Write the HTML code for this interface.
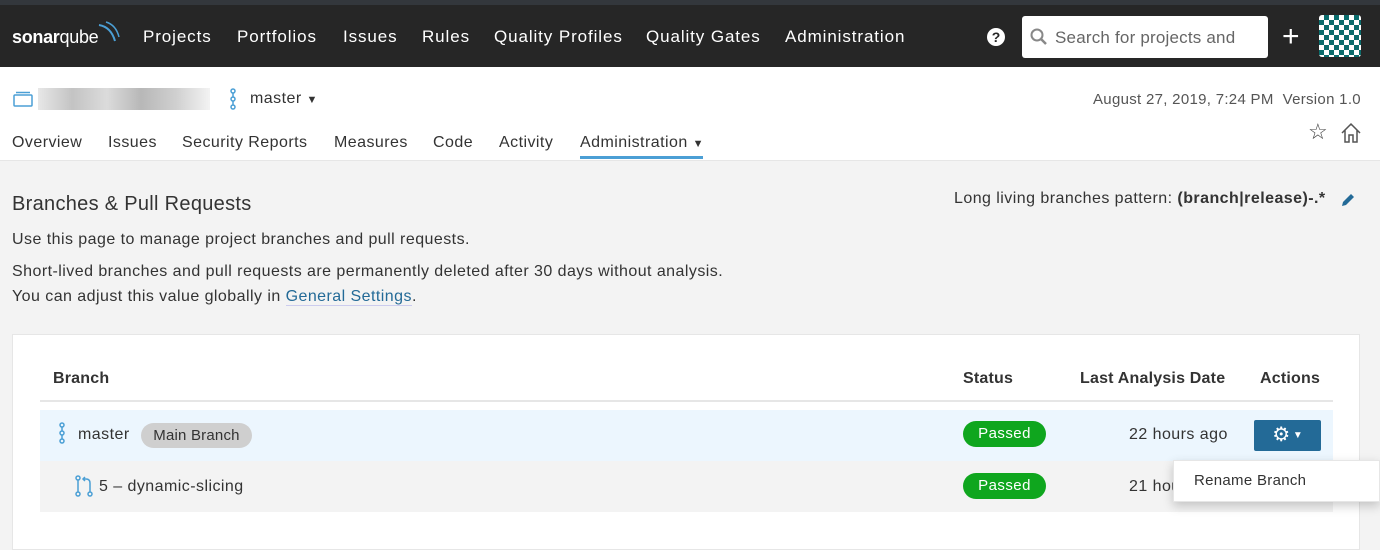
<!DOCTYPE html>
<html><head><style>
*{box-sizing:border-box;margin:0;padding:0}
body{width:1380px;height:550px;overflow:hidden;background:#f3f3f3;font-family:"Liberation Sans",Helvetica,Arial,sans-serif;color:#333;position:relative;letter-spacing:0.45px}
.a{position:absolute;white-space:nowrap}
.top{position:absolute;left:0;top:0;width:1380px;height:5px;background:#33373c}
.nav{position:absolute;left:0;top:5px;width:1380px;height:62px;background:#262626}
.n{color:#fff;font-size:17px;top:27px;letter-spacing:0.9px}
.sub{position:absolute;left:0;top:67px;width:1380px;height:94px;background:#fff;border-bottom:1px solid #e6e6e6}
.tab{font-size:16px;color:#333;top:134px}
.card{position:absolute;left:12px;top:334px;width:1348px;height:216px;background:#fff;border:1px solid #e6e6e6}
.th{font-size:16px;font-weight:bold;top:370px;letter-spacing:0.2px}
.pass{background:#0fa61e;color:#fff;font-size:15px;border-radius:14px;width:83px;height:26px;line-height:26px;text-align:center}
</style></head><body>
<div class="top"></div>
<div class="nav"></div>
<div class="a" style="left:12px;top:27px;color:#fff;font-size:18px;font-weight:bold;letter-spacing:-0.3px">sonar<span style="font-weight:normal">qube</span></div>
<svg class="a" style="left:97px;top:21px" width="24" height="24"><path d="M2 4 Q14 6 18 20" stroke="#4b9fd5" stroke-width="2" fill="none"/><path d="M9 1 Q19 4 22 16" stroke="#4b9fd5" stroke-width="1.5" fill="none"/></svg>
<div class="a n" style="left:143px">Projects</div>
<div class="a n" style="left:237px">Portfolios</div>
<div class="a n" style="left:343px">Issues</div>
<div class="a n" style="left:422px">Rules</div>
<div class="a n" style="left:494px">Quality Profiles</div>
<div class="a n" style="left:646px">Quality Gates</div>
<div class="a n" style="left:785px">Administration</div>
<div class="a" style="left:987px;top:28px;width:18px;height:18px;border-radius:50%;background:#fff;color:#262626;font-size:14px;font-weight:bold;text-align:center;line-height:18px;letter-spacing:0">?</div>
<div class="a" style="left:1022px;top:16px;width:246px;height:42px;background:#fff;border-radius:3px"></div>
<svg class="a" style="left:1030px;top:28px" width="18" height="18"><circle cx="7" cy="7" r="5.5" stroke="#888" stroke-width="2" fill="none"/><path d="M11 11 L16 16" stroke="#888" stroke-width="2.5"/></svg>
<div class="a" style="left:1055px;top:28px;font-size:17px;color:#666;letter-spacing:0.2px">Search for projects and</div>
<div class="a" style="left:1282px;top:20px;color:#fff;font-size:30px;font-weight:300">+</div>
<div class="a" style="left:1319px;top:15px;width:42px;height:42px;border-radius:3px;background:repeating-conic-gradient(#0b6b6b 0 25%,#fff 0 50%) 0 0/10px 10px"></div>
<div class="sub"></div>
<svg class="a" style="left:13px;top:89px" width="20" height="18"><rect x="1" y="6" width="18" height="11" rx="1" stroke="#4b9fd5" stroke-width="1.5" fill="none"/><path d="M3 3.5 H17" stroke="#4b9fd5" stroke-width="1.5"/></svg>
<div class="a" style="left:38px;top:88px;width:172px;height:22px;background:linear-gradient(90deg,#ddd,#aaa 20%,#ccc 40%,#999 60%,#bbb 80%,#eee);opacity:.7"></div>
<svg class="a" style="left:228px;top:88px" width="10" height="22"><g stroke="#4b9fd5" stroke-width="1.5" fill="none"><circle cx="5" cy="3" r="2"/><circle cx="5" cy="11" r="2"/><circle cx="5" cy="19" r="2"/><path d="M5 5V9M5 13V17"/></g></svg>
<div class="a" style="left:250px;top:90px;font-size:16px">master <span style="font-size:11px">▼</span></div>
<div class="a" style="left:1093px;top:91px;font-size:15px;color:#555;letter-spacing:0.3px">August 27, 2019, 7:24 PM &nbsp;Version 1.0</div>
<div class="a" style="left:1308px;top:119px;font-size:22px;color:#444">☆</div>
<svg class="a" style="left:1340px;top:122px" width="22" height="22"><path d="M2 11 L11 2 L20 11 M5 8 V20 H9 V13 H13 V20 H17 V8" stroke="#555" stroke-width="1.5" fill="none"/></svg>
<div class="a tab" style="left:12px">Overview</div>
<div class="a tab" style="left:108px">Issues</div>
<div class="a tab" style="left:182px">Security Reports</div>
<div class="a tab" style="left:334px">Measures</div>
<div class="a tab" style="left:433px">Code</div>
<div class="a tab" style="left:499px">Activity</div>
<div class="a tab" style="left:580px">Administration <span style="font-size:11px">▼</span></div>
<div class="a" style="left:580px;top:156px;width:123px;height:3px;background:#4b9fd5"></div>
<div class="a" style="left:12px;top:193px;font-size:20px;color:#333;letter-spacing:0.3px">Branches &amp; Pull Requests</div>
<div class="a" style="left:954px;top:190px;font-size:16px">Long living branches pattern: <b>(branch|release)-.*</b></div>
<svg class="a" style="left:1339px;top:191px" width="18" height="18"><path d="M3 15 L4 11 L12 3 L15 6 L7 14 Z" fill="#236a97"/></svg>
<div class="a" style="left:12px;top:231px;font-size:16px">Use this page to manage project branches and pull requests.</div>
<div class="a" style="left:12px;top:263px;font-size:16px">Short-lived branches and pull requests are permanently deleted after 30 days without analysis.</div>
<div class="a" style="left:12px;top:288px;font-size:16px">You can adjust this value globally in <span style="color:#236a97;border-bottom:1px solid #cce">General Settings</span>.</div>
<div class="card"></div>
<div class="a th" style="left:53px">Branch</div>
<div class="a th" style="left:963px">Status</div>
<div class="a th" style="left:1080px">Last Analysis Date</div>
<div class="a th" style="left:1260px">Actions</div>
<div class="a" style="left:40px;top:400px;width:1293px;height:2px;background:#e6e6e6"></div>
<div class="a" style="left:40px;top:410px;width:1293px;height:51px;background:#ecf6fe"></div>
<div class="a" style="left:40px;top:461px;width:1293px;height:51px;background:#f3f3f3"></div>
<svg class="a" style="left:57px;top:422px" width="10" height="22"><g stroke="#4b9fd5" stroke-width="1.5" fill="none"><circle cx="5" cy="3" r="2"/><circle cx="5" cy="11" r="2"/><circle cx="5" cy="19" r="2"/><path d="M5 5V9M5 13V17"/></g></svg>
<div class="a" style="left:78px;top:426px;font-size:16px">master</div>
<div class="a" style="left:141px;top:423px;width:111px;height:25px;background:#cfcfcf;border-radius:13px;font-size:15px;line-height:25px;text-align:center;letter-spacing:0.2px">Main Branch</div>
<svg class="a" style="left:74px;top:475px" width="20" height="22"><g stroke="#4b9fd5" stroke-width="1.5" fill="none"><circle cx="4" cy="3" r="2"/><circle cx="4" cy="19" r="2"/><circle cx="16" cy="19" r="2"/><path d="M4 5V17M16 17V8Q16 4 12 4H9M11 2L9 4L11 6"/></g></svg>
<div class="a" style="left:99px;top:478px;font-size:16px">5 – dynamic-slicing</div>
<div class="a pass" style="left:963px;top:421px">Passed</div>
<div class="a pass" style="left:963px;top:473px">Passed</div>
<div class="a" style="left:1129px;top:426px;font-size:16px">22 hours ago</div>
<div class="a" style="left:1129px;top:478px;font-size:16px">21 hours ago</div>
<div class="a" style="left:1254px;top:420px;width:67px;height:31px;background:#236a97;border-radius:2px;color:#fff;text-align:center;line-height:31px;font-size:20px;letter-spacing:0">⚙<span style="font-size:10px;vertical-align:3px"> ▼</span></div>
<div class="a" style="left:1173px;top:460px;width:207px;height:42px;background:#fff;box-shadow:0 4px 10px rgba(0,0,0,.2);border:1px solid #e6e6e6"></div>
<div class="a" style="left:1194px;top:472px;font-size:15px;letter-spacing:0.3px">Rename Branch</div>
</body></html>
